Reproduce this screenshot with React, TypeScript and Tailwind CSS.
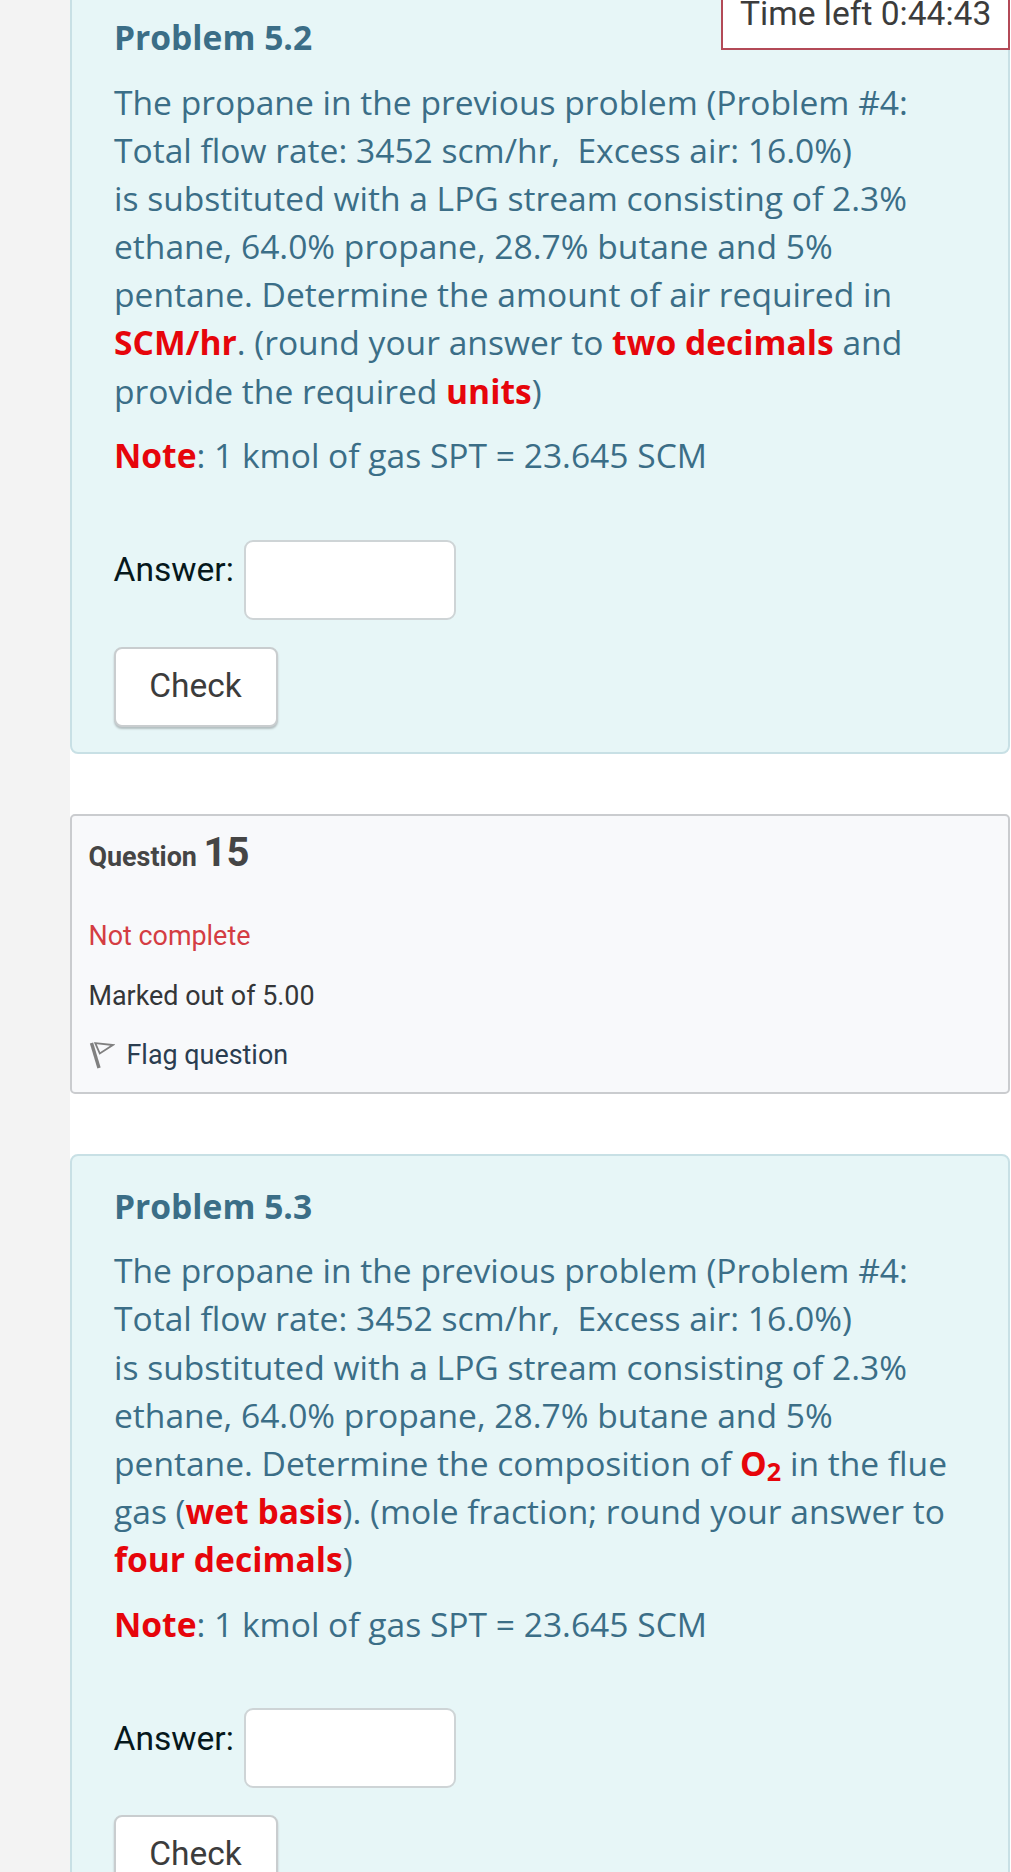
import type { ReactNode } from "react";

const Red = ({ children }: { children: ReactNode }) => (
  <strong className="font-bold text-[#e6050b]">{children}</strong>
);

// common first part of both problems
const Intro = () => (
  <>
    The propane in the previous problem (Problem #4:
    <br />
    Total flow rate: 3452 scm/hr,&nbsp; Excess air: 16.0%)
    <br />
    is substituted with a LPG stream consisting of 2.3%
    <br />
    ethane, 64.0% propane, 28.7% butane and 5%
    <br />
  </>
);

function Problem({ title, children }: { title: string; children: ReactNode }) {
  return (
    <section className="h-[768.7px] shrink-0 rounded-[8px] border-2 border-[#c8e0e5] bg-[#e7f6f7] px-[42px] pt-[26px]">
      <div className="whitespace-nowrap font-['Open_Sans',sans-serif] text-[33.6px] leading-[48.15px] text-[#3b6e87]">
        <h4 className="mb-[16.45px] font-bold">{title}</h4>
        <p className="mb-[16.4px]">{children}</p>
        <p>
          <Red>Note</Red>: 1 kmol of gas SPT = 23.645 SCM
        </p>
      </div>

      {/* answer */}
      <div className="mt-[60.4px] flex items-start">
        <label className="-ml-[0.5px] w-[130.5px] pt-[6.3px] text-[33.6px] leading-[48px] text-[#06181c]">
          Answer:
        </label>
        <input
          type="text"
          className="h-[80px] w-[212px] rounded-[9px] border-2 border-[#ced4d6] bg-white px-4 text-[33.6px]"
        />
      </div>

      <button className="mt-[27px] h-[80px] w-[164px] rounded-[8px] border-2 border-[#c9cdcf] bg-white pr-px pb-[2px] text-[33.5px] leading-[48px] text-[#3c3c3c] shadow-[0_2px_2px_#b4bfc1]">
        Check
      </button>
    </section>
  );
}

export default function App() {
  return (
    <div className="relative h-[1872px] w-full overflow-hidden bg-[#f3f3f3] pl-[70px] font-[Roboto,sans-serif]">
      <main className="flex h-full flex-col bg-white pr-px">
        <div className="-mt-[15px] flex flex-col">
          <Problem title="Problem 5.2">
            <Intro />
            pentane. Determine the amount of air required in
            <br />
            <Red>SCM/hr</Red>. (round your answer to <Red>two decimals</Red> and
            <br />
            provide the required <Red>units</Red>)
          </Problem>

          {/* question info */}
          <section className="my-[60px] h-[280px] rounded-[5px] border-2 border-[#cacccf] bg-[#f8f9fb] px-[16.5px] text-[26.9px] leading-[40px] text-[#343638]">
            <h3 className="pt-[15px] font-bold leading-[44px] text-[#454545]">
              Question <span className="text-[40px]">15</span>
            </h3>
            <div className="mt-[37px] text-[#d43d43]">Not complete</div>
            <div className="mt-[20px]">Marked out of 5.00</div>
            <div className="mt-[19px] flex items-center text-[#2b3d50]">
              <svg width="26" height="28" viewBox="0 0 26 28" fill="none" stroke="#808080" className="mr-[12px]">
                <path d="M2.5 2 10 27" strokeWidth="3.4" />
                <path d="M6.3 2.2 23.8 4 10.8 12.5Z" strokeWidth="1.8" />
              </svg>
              Flag question
            </div>
          </section>

          <Problem title="Problem 5.3">
            <Intro />
            pentane. Determine the composition of{" "}
            <Red>
              O<sub className="bottom-[-0.2em] text-[75%]">2</sub>
            </Red>{" "}
            in the flue
            <br />
            gas (<Red>wet basis</Red>). (mole fraction; round your answer to
            <br />
            <Red>four decimals</Red>)
          </Problem>
        </div>
      </main>

      {/* timer */}
      <div className="absolute -top-[6px] right-px h-[56px] w-[289px] whitespace-nowrap border-2 border-[#b34a57] bg-white pl-[17px] text-[33.6px] leading-[36px] text-[#3c3c3c]">
        Time left 0:44:43
      </div>
    </div>
  );
}
